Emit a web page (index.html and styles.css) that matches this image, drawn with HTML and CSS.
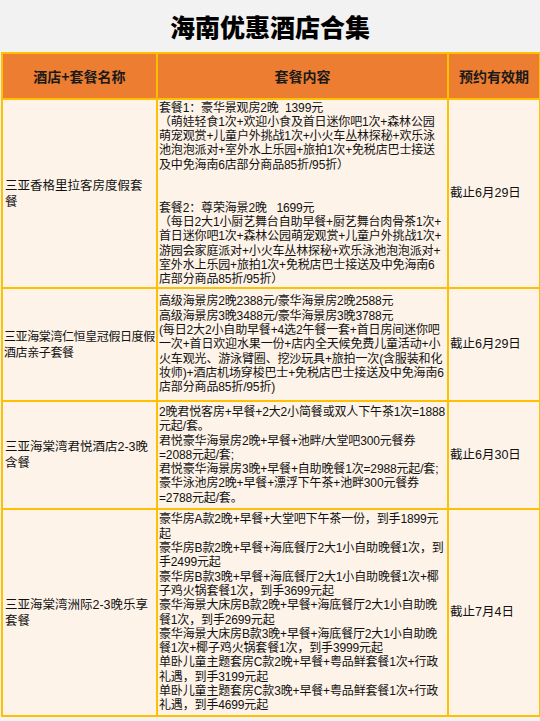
FILE: index.html
```html
<!DOCTYPE html>
<html lang="zh-CN">
<head>
<meta charset="utf-8">
<title>海南优惠酒店合集</title>
<link rel="stylesheet" href="styles.css">
</head>
<body>
<div class="page">
  <h1 class="title">海南优惠酒店合集</h1>
  <table class="deals">
    <colgroup>
      <col class="c-name">
      <col class="c-content">
      <col class="c-date">
    </colgroup>
    <thead>
      <tr class="head">
        <th>酒店+套餐名称</th>
        <th>套餐内容</th>
        <th>预约有效期</th>
      </tr>
    </thead>
    <tbody>
      <tr class="r1">
        <td class="name">三亚香格里拉客房度假套<br>餐</td>
        <td class="content">套餐1：豪华景观房2晚&nbsp;&nbsp;1399元<br>（萌娃轻食1次+欢迎小食及首日迷你吧1次+森林公园<br>萌宠观赏+儿童户外挑战1次+小火车丛林探秘+欢乐泳<br>池泡泡派对+室外水上乐园+旅拍1次+免税店巴士接送<br>及中免海南6店部分商品85折/95折）<br>&nbsp;<br>&nbsp;<br>套餐2：尊荣海景2晚&nbsp;&nbsp;&nbsp;1699元<br>（每日2大1小厨艺舞台自助早餐+厨艺舞台肉骨茶1次+<br>首日迷你吧1次+森林公园萌宠观赏+儿童户外挑战1次+<br>游园会家庭派对+小火车丛林探秘+欢乐泳池泡泡派对+<br>室外水上乐园+旅拍1次+免税店巴士接送及中免海南6<br>店部分商品85折/95折）</td>
        <td class="date">截止6月29日</td>
      </tr>
      <tr class="r2">
        <td class="name tight">三亚海棠湾仁恒皇冠假日度假<br>酒店亲子套餐</td>
        <td class="content">高级海景房2晚2388元/豪华海景房2晚2588元<br>高级海景房3晚3488元/豪华海景房3晚3788元<br>(每日2大2小自助早餐+4选2午餐一套+首日房间迷你吧<br>一次+首日欢迎水果一份+店内全天候免费儿童活动+小<br>火车观光、游泳臂圈、挖沙玩具+旅拍一次(含服装和化<br>妆师)+酒店机场穿梭巴士+免税店巴士接送及中免海南6<br>店部分商品85折/95折)</td>
        <td class="date">截止6月29日</td>
      </tr>
      <tr class="r3">
        <td class="name">三亚海棠湾君悦酒店2-3晚<br>含餐</td>
        <td class="content">2晚君悦客房+早餐+2大2小简餐或双人下午茶1次=1888<br>元起/套。<br>君悦豪华海景房2晚+早餐+池畔/大堂吧300元餐券<br>=2088元起/套;<br>君悦豪华海景房3晚+早餐+自助晚餐1次=2988元起/套;<br>豪华泳池房2晚+早餐+漂浮下午茶+池畔300元餐券<br>=2788元起/套。</td>
        <td class="date">截止6月30日</td>
      </tr>
      <tr class="r4">
        <td class="name">三亚海棠湾洲际2-3晚乐享<br>套餐</td>
        <td class="content">豪华房A款2晚+早餐+大堂吧下午茶一份，到手1899元<br>起<br>豪华房B款2晚+早餐+海底餐厅2大1小自助晚餐1次，到<br>手2499元起<br>豪华房B款3晚+早餐+海底餐厅2大1小自助晚餐1次+椰<br>子鸡火锅套餐1次，到手3699元起<br>豪华海景大床房B款2晚+早餐+海底餐厅2大1小自助晚<br>餐1次，到手2699元起<br>豪华海景大床房B款3晚+早餐+海底餐厅2大1小自助晚<br>餐1次+椰子鸡火锅套餐1次，到手3999元起<br>单卧儿童主题套房C款2晚+早餐+粤品鲜套餐1次+行政<br>礼遇，到手3199元起<br>单卧儿童主题套房C款3晚+早餐+粤品鲜套餐1次+行政<br>礼遇，到手4699元起</td>
        <td class="date">截止7月4日</td>
      </tr>
    </tbody>
  </table>
</div>
</body>
</html>
```
FILE: styles.css
```css
html, body {
  margin: 0;
  padding: 0;
  background: #f2f2f2;
}

.page {
  width: 540px;
  font-family: "Liberation Sans", "Noto Sans CJK SC", sans-serif;
  color: #111;
}

.title {
  margin: 0;
  height: 52px;
  line-height: 52px;
  text-align: center;
  font-size: 25px;
  font-weight: 900;
  font-family: "Noto Sans CJK SC", sans-serif;
  color: #000;
}

.deals {
  border-collapse: collapse;
  margin-left: 1px;
  width: 538px;
  table-layout: fixed;
}

.c-name { width: 155px; }
.c-content { width: 291px; }
.c-date { width: 92px; }

.deals th,
.deals td {
  border: 2px solid #ffc000;
  padding: 0 1px;
  vertical-align: middle;
  text-align: left;
}

.head {
  height: 46px;
  background: #ed7d31;
}

.head th {
  text-align: center;
  font-size: 14px;
  font-weight: 700;
  color: #1a1a1a;
  font-family: "Noto Sans CJK SC", sans-serif;
}

.deals tbody td {
  background: #fdf3e8;
  font-size: 12px;
  line-height: 14.3px;
  white-space: nowrap;
  overflow: hidden;
}

.deals td.content {
  letter-spacing: -0.15px;
}

.deals td.name {
  font-size: 12.5px;
  line-height: 16px;
  padding-left: 2px;
}

.deals td.name.tight {
  font-size: 12px;
  letter-spacing: -0.4px;
  padding-left: 1px;
}

.deals td.date {
  font-size: 12.5px;
  padding-left: 1px;
}

.r1 { height: 189px; }
.r2 { height: 113px; }
.r3 { height: 108px; }
.r4 { height: 207px; }
```
